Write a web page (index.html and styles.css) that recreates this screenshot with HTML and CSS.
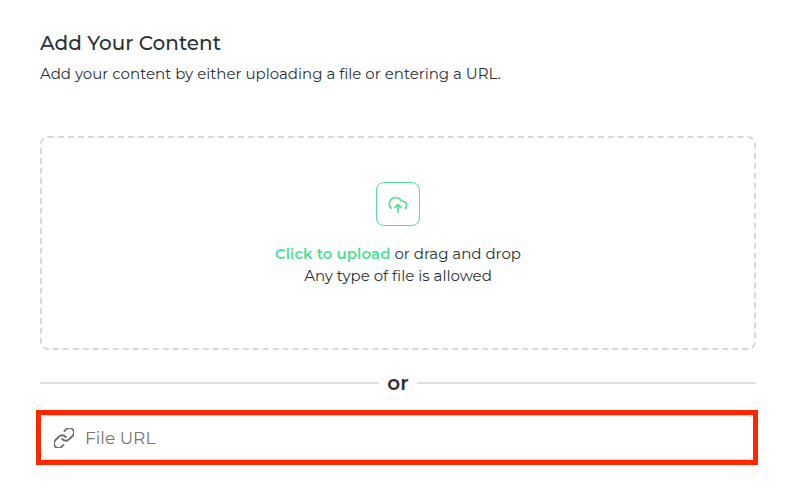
FILE: index.html
```html
<!DOCTYPE html>
<html lang="en">
<head>
<meta charset="utf-8">
<meta name="viewport" content="width=device-width, initial-scale=1">
<title>Add Your Content</title>
<link rel="stylesheet" href="styles.css">
</head>
<body>
<main class="content">
  <h1 class="title">Add Your Content</h1>
  <p class="subtitle">Add your content by either uploading a file or entering a URL.</p>
  <section class="dropzone">
    <span class="upload-icon">
      <svg width="20" height="20" viewBox="0 0 20 20" fill="none" stroke="currentColor" stroke-width="1.7" stroke-linecap="round" stroke-linejoin="round" aria-hidden="true">
        <path d="M3.300 14.200A5.400 5.400 0 0 1 1.300 9.800C1.300 6.200 4.100 3.500 7.600 3.500c2.500 0 4.600 1.400 5.600 3.500 3.100-.1 5.500 1.900 5.500 4.600 0 1.200-.5 2.200-1.300 3"/>
        <path d="M10 18.100V10.500M6.800 13.500L10 10.300l3.200 3.200"/>
      </svg>
    </span>
    <p class="prompt"><button class="upload-button" type="button">Click to upload</button> or drag and drop</p>
    <p class="prompt">Any type of file is allowed</p>
  </section>
  <div class="divider"><span>or</span></div>
  <div class="field">
    <label class="field-icon" for="file-url" aria-label="File URL">
      <svg width="20" height="20" viewBox="1 1 22 22" fill="none" stroke="currentColor" stroke-width="2" stroke-linecap="round" stroke-linejoin="round" aria-hidden="true">
        <path d="M10 13a5 5 0 0 0 7.540.540l4-4a5 5 0 0 0-7.070-7.070l-2 2"/>
        <path d="M14 11a5 5 0 0 0-7.540-.540l-4 4a5 5 0 0 0 7.070 7.070l2-2"/>
      </svg>
    </label>
    <input class="field-input" id="file-url" type="url" placeholder="File URL">
  </div>
</main>
</body>
</html>
```
FILE: styles.css
```css
* {
  box-sizing: border-box;
}

body {
  margin: 0;
  background: #fff;
  color: #2b3237;
  font-family: Montserrat, Inter, "Open Sans", sans-serif;
  font-size: 15px;
  line-height: 22px;
}

.content {
  padding: 30px 36px 38px 40px;
}

.title {
  margin: 0;
  font-size: 20px;
  font-weight: 500;
  line-height: 26px;
}

.subtitle {
  margin: 7px 0 51px;
}

.dropzone {
  display: flex;
  flex-direction: column;
  align-items: center;
  padding: 44px 24px 61px;
  border: 2px dashed #d9d9d9;
  border-radius: 8px;
}

.upload-icon {
  display: grid;
  place-items: center;
  width: 44px;
  height: 44px;
  margin-bottom: 17px;
  border: 1px solid #4fdf94;
  border-radius: 8px;
  color: #4fdf94;
}

.prompt {
  margin: 0;
}

.upload-button {
  padding: 0;
  border: 0;
  background: none;
  color: #4fdf94;
  font: inherit;
  font-weight: 600;
  cursor: pointer;
}

.divider {
  display: flex;
  align-items: center;
  gap: 8px;
  margin: 20px 0 19px;
  font-size: 20px;
  font-weight: 600;
  line-height: 26px;
}

.divider::before,
.divider::after {
  content: "";
  flex: 1;
  height: 2px;
  background: #e0e0e0;
}

.field {
  position: relative;
  display: flex;
  align-items: center;
  gap: 11px;
  height: 45px;
  padding: 0 13px;
  border: 1px solid #d0d5dd;
  border-radius: 8px;
}

.field::after {
  content: "";
  position: absolute;
  inset: -6px -3px -6px -5px;
  border: 5px solid #ff2600;
  pointer-events: none;
}

.field-icon {
  display: flex;
  color: #666a73;
}

.field-input {
  flex: 1;
  min-width: 0;
  padding: 0;
  border: 0;
  outline: 0;
  background: transparent;
  color: inherit;
  font: inherit;
  font-size: 17px;
}

.field-input::placeholder {
  color: #757575;
  opacity: 1;
}
```
